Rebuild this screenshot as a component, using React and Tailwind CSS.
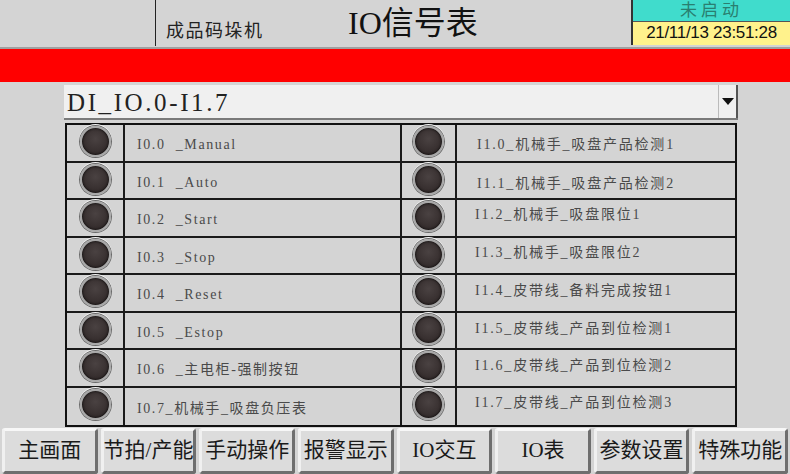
import React from "react";

const serif = { fontFamily: '"Liberation Serif", "Noto Sans CJK SC", serif' };

const left = [
  "I0.0  _Manual",
  "I0.1  _Auto",
  "I0.2  _Start",
  "I0.3  _Stop",
  "I0.4  _Reset",
  "I0.5  _Estop",
  "I0.6  _主电柜-强制按钮",
  "I0.7_机械手_吸盘负压表",
];

const right = [
  { t: "I1.0_机械手_吸盘产品检测1", c: "pt-[3px] pl-[20px]" },
  { t: "I1.1_机械手_吸盘产品检测2", c: "pt-[6px] pl-[20px]" },
  { t: "I1.2_机械手_吸盘限位1", c: "pb-[6px] pl-[18px]" },
  { t: "I1.3_机械手_吸盘限位2", c: "pb-[6px] pl-[18px]" },
  { t: "I1.4_皮带线_备料完成按钮1", c: "pb-[4px] pl-[18px]" },
  { t: "I1.5_皮带线_产品到位检测1", c: "pb-[4px] pl-[18px]" },
  { t: "I1.6_皮带线_产品到位检测2", c: "pb-[4px] pl-[18px]" },
  { t: "I1.7_皮带线_产品到位检测3", c: "pb-[8px] pl-[18px]" },
];

const buttons = ["主画面", "节拍/产能", "手动操作", "报警显示", "IO交互", "IO表", "参数设置", "特殊功能"];

function Lamp() {
  return (
    <div className="w-[31px] h-[31px] rounded-full border-2 border-[#a8a8a8] shadow-[0_0_0_1px_#6a6a6a,0_-1px_0_1px_#f4f4f4,inset_0_0_3px_#000] bg-[radial-gradient(circle_at_50%_40%,#4a4242,#2b2323)]" />
  );
}

export default function App() {
  return (
    <div className="w-[790px] h-[474px] bg-[#d4d4d4] flex flex-col overflow-hidden" style={serif}>
      {/* header */}
      <div className="h-[46px] flex">
        <div className="w-[156px] border-r border-[#222]" />
        <div className="w-[192px] pl-[10px] pt-[22px] text-[18px] tracking-[1.5px] text-[#222] leading-none">成品码垛机</div>
        <div className="pt-[3px] text-[32px] leading-[40px] text-[#111]">IO信号表</div>
        <div className="flex-1" />
        <div className="w-[159px] h-[45px] border-l-2 border-[#333] flex flex-col">
          <div className="h-[21px] bg-[#40dccc] text-[#2a7f70] text-[17px] leading-[21px] text-center tracking-[4px]">未启动</div>
          <div className="flex-1 bg-[#fff28c] border-t border-[#555] text-center text-[17px] leading-[22px] tracking-[-0.3px] text-[#111]" style={{ fontFamily: '"Liberation Sans", sans-serif' }}>
            21/11/13 23:51:28
          </div>
        </div>
      </div>

      {/* alarm bar */}
      <div className="mt-[1px] h-[35px] bg-[#ff0000] border-t-2 border-[#a0a0a0]" />

      {/* selector */}
      <div className="mt-[3px] ml-[64px] w-[674px] h-[35px] bg-[#f0f0f0] flex border-b-2 border-[#7a7a7a]">
        <div className="flex-1 pl-[3px] text-[25px] leading-[36px] tracking-[2.6px] text-[#222]">DI_IO.0-I1.7</div>
        <div className="w-[20px] border-l border-[#bbb] border-r-2 border-r-[#555] flex items-center justify-center">
          <div className="w-0 h-0 border-l-[6px] border-r-[6px] border-t-[7px] border-l-transparent border-r-transparent border-t-[#111]" />
        </div>
      </div>

      {/* table */}
      <div className="mt-[3px] ml-[65px] w-[672px] border-2 border-[#111] flex flex-col">
        {left.map((l, i) => (
          <div key={i} className={`h-[37.5px] flex ${i < 7 ? "border-b-2 border-[#1a1a1a]" : ""}`}>
            <div className="w-[58px] border-r-2 border-[#1a1a1a] flex justify-center pt-[1px]">
              <Lamp />
            </div>
            <div className="w-[277px] border-r-2 border-[#1a1a1a] flex items-center pl-[12px] pt-[4px] text-[14px] tracking-[1.6px] text-[#4a4a4a] whitespace-pre">
              {l}
            </div>
            <div className="w-[55px] border-r-2 border-[#1a1a1a] flex justify-center pt-[1px]">
              <Lamp />
            </div>
            <div className={`flex-1 flex items-center text-[14px] tracking-[1.8px] text-[#4a4a4a] ${right[i].c}`}>
              {right[i].t}
            </div>
          </div>
        ))}
      </div>

      {/* nav buttons */}
      <div className="mt-auto h-[46px] flex gap-[3px] px-[2px]">
        {buttons.map((b) => (
          <div
            key={b}
            className="flex-1 bg-[#dcdcdc] border-[3px] border-t-[#f7f7f7] border-l-[#f0f0f0] border-r-[#6e6e6e] border-b-[#6e6e6e] rounded-[3px] flex items-center justify-center text-[21px] text-[#1a1a1a] whitespace-nowrap"
          >
            {b}
          </div>
        ))}
      </div>
    </div>
  );
}
